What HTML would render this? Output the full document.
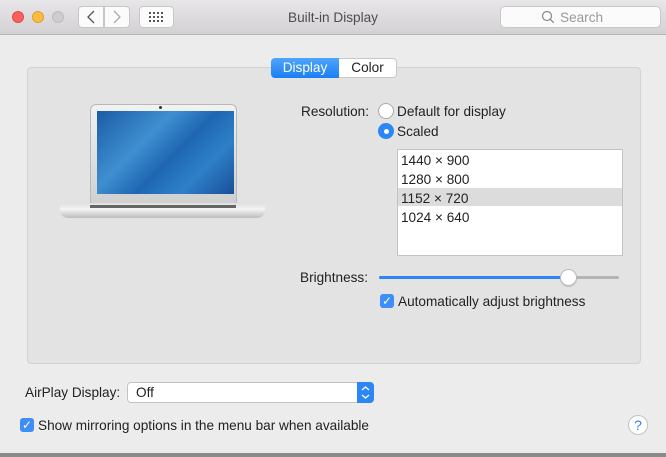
<!DOCTYPE html>
<html><head><style>
*{box-sizing:border-box;margin:0;padding:0}
body{width:666px;height:457px;overflow:hidden;background:#ececec;font-family:"Liberation Sans",sans-serif;font-size:13.6px;color:#222;position:relative}
.abs{position:absolute}
.tb{left:0;top:0;width:666px;height:35px;background:linear-gradient(#e8e6e8,#d3d1d3);border-bottom:1px solid #b3b3b3}
.dot{width:12px;height:12px;border-radius:50%;top:11px}
.btn{background:#fbfbfb;border:1px solid #c8c8c8;border-radius:4px}
.panel{left:27px;top:67px;width:614px;height:297px;background:#e3e3e3;border:1px solid #d2d2d2;border-radius:4px}
.radio{width:16px;height:16px;border-radius:50%}
.cb{width:14px;height:14px;border-radius:3px;background:#3d8ef7;color:#fff;font-size:12px;line-height:14px;text-align:center}
</style></head><body>
<div class="abs tb"></div>
<div class="abs dot" style="left:12px;background:#fc605c;border:1px solid #de4a45"></div>
<div class="abs dot" style="left:32px;background:#fdbc40;border:1px solid #dfa030"></div>
<div class="abs dot" style="left:52px;background:#cdcdcd;border:1px solid #bcbcbc"></div>
<div class="abs btn" style="left:78px;top:6px;width:26px;height:22px;border-radius:4px 0 0 4px"></div>
<div class="abs btn" style="left:104px;top:6px;width:26px;height:22px;border-radius:0 4px 4px 0"></div>
<svg class="abs" style="left:78px;top:6px" width="52" height="22"><path d="M16 5l-6 6 6 6" stroke="#555" stroke-width="1.3" fill="none"/><path d="M36 5l6 6-6 6" stroke="#aaa" stroke-width="1.3" fill="none"/></svg>
<div class="abs btn" style="left:139px;top:6px;width:35px;height:22px"></div>
<svg class="abs" style="left:139px;top:6px" width="35" height="22"><g fill="#555"><rect x="10" y="6" width="2" height="2"/><rect x="14" y="6" width="2" height="2"/><rect x="18" y="6" width="2" height="2"/><rect x="22" y="6" width="2" height="2"/><rect x="10" y="10" width="2" height="2"/><rect x="14" y="10" width="2" height="2"/><rect x="18" y="10" width="2" height="2"/><rect x="22" y="10" width="2" height="2"/><rect x="10" y="14" width="2" height="2"/><rect x="14" y="14" width="2" height="2"/><rect x="18" y="14" width="2" height="2"/><rect x="22" y="14" width="2" height="2"/></g></svg>
<div class="abs" style="left:0;width:666px;top:10px;text-align:center;color:#4d4d4d">Built-in Display</div>
<div class="abs btn" style="left:500px;top:6px;width:161px;height:22px;border-radius:5px"></div>
<svg class="abs" style="left:541px;top:10px" width="14" height="14"><circle cx="6" cy="6" r="4.5" stroke="#888" stroke-width="1.2" fill="none"/><path d="M9.3 9.3l3.5 3.5" stroke="#888" stroke-width="1.3"/></svg>
<div class="abs" style="left:560px;top:10px;color:#999">Search</div>

<div class="abs panel"></div>
<div class="abs" style="left:271px;top:58px;width:68px;height:20px;background:linear-gradient(#4ea5fb,#1a7ef6);border-radius:4px 0 0 4px;color:#fff;text-align:center;line-height:20px">Display</div>
<div class="abs" style="left:339px;top:58px;width:58px;height:20px;background:#fff;border:1px solid #c8c8c8;border-left:none;border-radius:0 4px 4px 0;text-align:center;line-height:18px">Color</div>

<div class="abs" style="left:90px;top:104px;width:147px;height:102px;background:linear-gradient(#f2f2f2,#cfcfcf);border:1px solid #b8b8b8;border-radius:6px 6px 0 0"></div>
<div class="abs" style="left:97px;top:111px;width:137px;height:83px;background:linear-gradient(135deg,#1b5ca6 0%,#3f8fd0 35%,#1f66b2 55%,#2d80c8 75%,#1a4f98 100%)"></div>
<div class="abs" style="left:159px;top:106px;width:3px;height:3px;border-radius:50%;background:#333"></div>
<div class="abs" style="left:60px;top:203px;width:205px;height:15px;background:linear-gradient(#dedede,#f4f4f4 40%,#bdbdbd);border-radius:2px 2px 8px 8px"></div>
<div class="abs" style="left:90px;top:205px;width:146px;height:3px;background:#666"></div>

<div class="abs" style="left:301px;top:104px">Resolution:</div>
<div class="abs radio" style="left:378px;top:103px;background:#fff;border:1px solid #aaa"></div>
<div class="abs" style="left:397px;top:104px">Default for display</div>
<div class="abs radio" style="left:378px;top:123px;background:#2d86f6"></div>
<div class="abs" style="left:384px;top:129px;width:5px;height:5px;border-radius:50%;background:#fff"></div>
<div class="abs" style="left:397px;top:124px">Scaled</div>
<div class="abs" style="left:397px;top:149px;width:226px;height:107px;background:#fff;border:1px solid #c3c3c3"></div>
<div class="abs" style="left:398px;top:188px;width:224px;height:18px;background:#dcdcdc"></div>
<div class="abs" style="left:401px;top:151px;line-height:19px">1440 × 900<br>1280 × 800<br>1152 × 720<br>1024 × 640</div>

<div class="abs" style="left:300px;top:270px">Brightness:</div>
<div class="abs" style="left:379px;top:276px;width:240px;height:3px;background:#b5b5b5;border-radius:2px"></div>
<div class="abs" style="left:379px;top:276px;width:190px;height:3px;background:#2d86f6;border-radius:2px"></div>
<div class="abs" style="left:560px;top:269px;width:17px;height:17px;border-radius:50%;background:#fff;border:1px solid #bbb;box-shadow:0 1px 1px rgba(0,0,0,.15)"></div>
<div class="abs cb" style="left:380px;top:294px">✓</div>
<div class="abs" style="left:398px;top:294px">Automatically adjust brightness</div>

<div class="abs" style="left:25px;top:385px">AirPlay Display:</div>
<div class="abs" style="left:127px;top:382px;width:247px;height:21px;background:#fff;border:1px solid #c3c3c3;border-radius:4px"></div>
<div class="abs" style="left:136px;top:385px">Off</div>
<div class="abs" style="left:357px;top:382px;width:17px;height:21px;background:#2d86f6;border-radius:0 4px 4px 0"></div>
<svg class="abs" style="left:357px;top:382px" width="17" height="21"><path d="M5 8l3.5-3 3.5 3M5 13l3.5 3 3.5-3" stroke="#fff" stroke-width="1.3" fill="none"/></svg>
<div class="abs cb" style="left:20px;top:418px">✓</div>
<div class="abs" style="left:38px;top:418px">Show mirroring options in the menu bar when available</div>
<div class="abs" style="left:628px;top:415px;width:20px;height:20px;border-radius:50%;background:#fff;border:1px solid #c3c3c3;color:#2d86f6;text-align:center;line-height:18px;font-size:14px">?</div>
<div class="abs" style="left:0;top:453px;width:666px;height:4px;background:#8a8a8a"></div>
</body></html>
